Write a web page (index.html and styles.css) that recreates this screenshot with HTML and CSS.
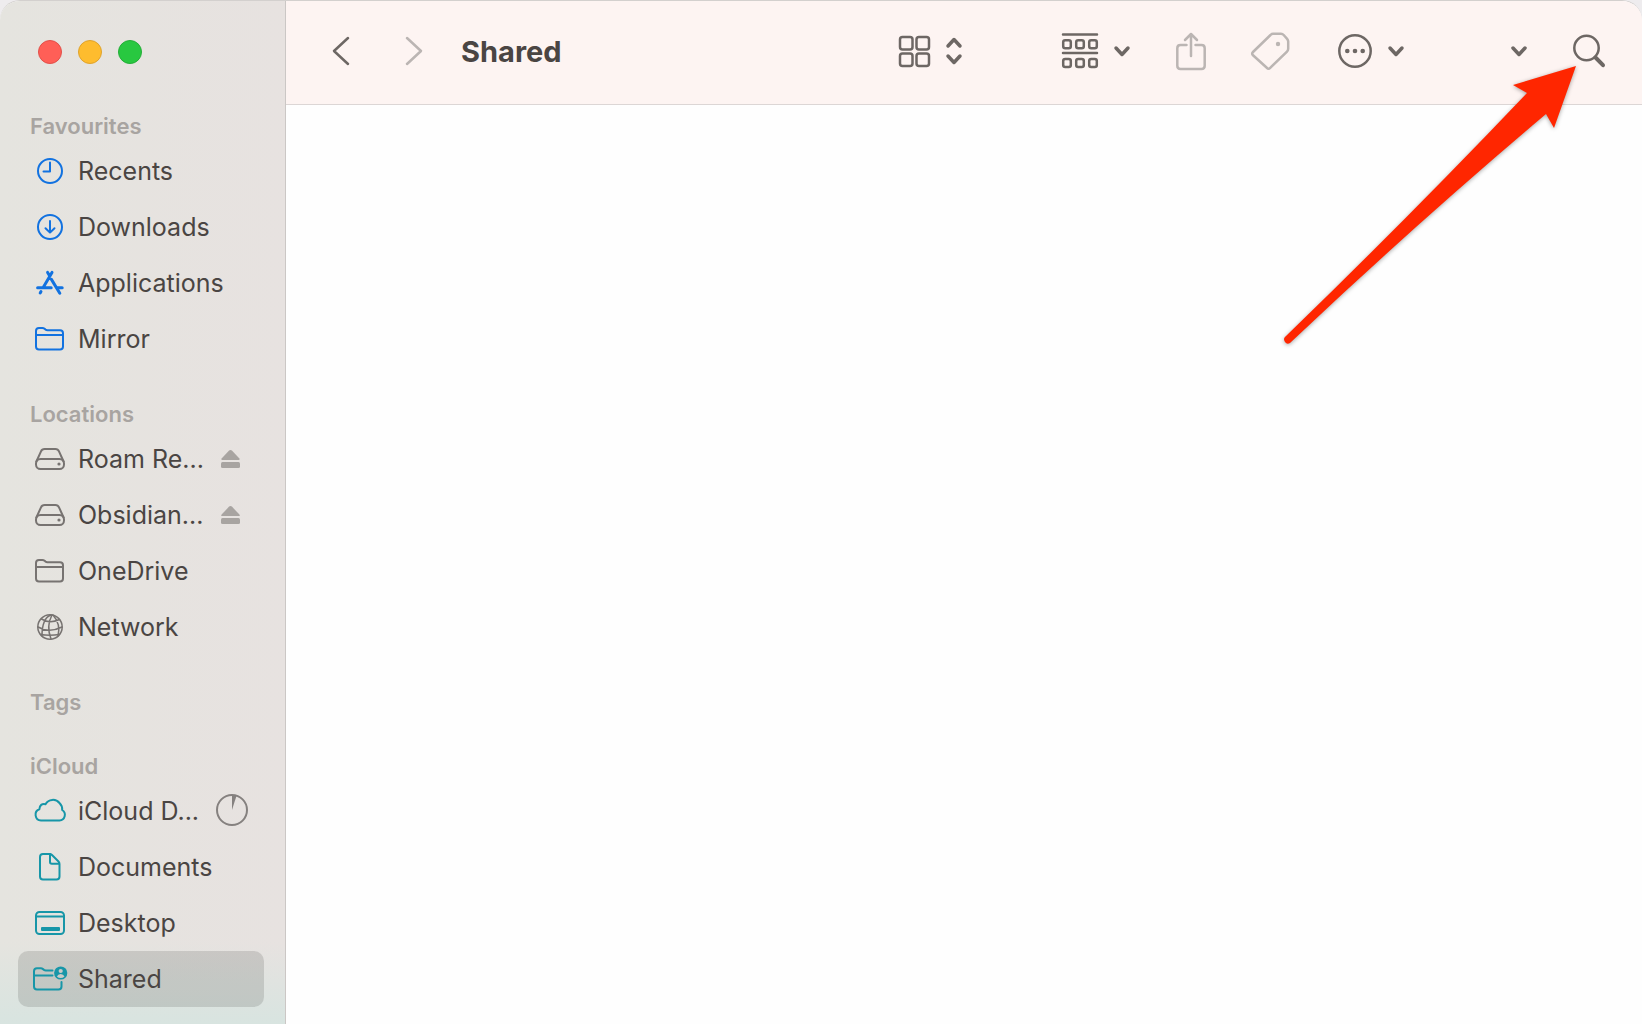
FILE: index.html
```html
<!DOCTYPE html>
<html lang="en">
<head>
  <meta charset="UTF-8" />
  <meta name="viewport" content="width=device-width, initial-scale=1.0" />
  <title>Shared</title>
  <link rel="stylesheet" href="styles.css">
</head>
<body>
  <div class="window">
    <aside class="sidebar">
      <div class="window-controls">
        <button class="dot close" aria-label="Close"></button>
        <button class="dot minimise" aria-label="Minimise"></button>
        <button class="dot zoom" aria-label="Zoom"></button>
      </div>

      <nav class="places">
        <section>
          <h2>Favourites</h2>
          <ul class="blue">
            <li>
              <a href="#recents">
                <svg class="icon" viewBox="0 0 34 34"><circle cx="17" cy="17" r="12" /><path d="M17 8.5v9h-6.5" /></svg>
                <span>Recents</span>
              </a>
            </li>
            <li>
              <a href="#downloads">
                <svg class="icon" viewBox="0 0 34 34"><circle cx="17" cy="17" r="12" /><path d="M17 11v11.5M12.5 18.2l4.5 4.4 4.5-4.4" /></svg>
                <span>Downloads</span>
              </a>
            </li>
            <li>
              <a href="#applications">
                <svg class="icon thick" viewBox="0 0 34 34"><path d="M19 6.4L10.2 21.6M14.6 6.4l2 3.4M18.4 13.4L26.8 27.2M4.6 21.7h13.6M24.6 21.7h4.6M8 25.6l-.8 1.4" /></svg>
                <span>Applications</span>
              </a>
            </li>
            <li>
              <a href="#mirror">
                <svg class="icon" viewBox="0 0 34 34"><path d="M3 24.5V9q0-3 3-3h3.4q1.2 0 2.2.8l1 .8q.8.6 1.8.6H27q3 0 3 3v13.3q0 3-3 3H6q-3 0-3-3zM3 13h27" /></svg>
                <span>Mirror</span>
              </a>
            </li>
          </ul>
        </section>

        <section>
          <h2>Locations</h2>
          <ul class="grey">
            <li>
              <a href="#roam">
                <svg class="icon" viewBox="0 0 34 34"><path d="M3.4 19.5L8 9.3Q9 7 11.5 7h11Q25 7 26 9.3l4.6 10.2" /><rect x="3" y="17" width="28" height="10" rx="4.5" /><circle class="solid" cx="26" cy="22" r="1.6" /></svg>
                <span>Roam Re...</span>
              </a>
              <button class="eject" aria-label="Eject Roam Research">
                <svg viewBox="0 0 32 34"><path d="M14.5 8q.8 0 1.4.6l7.500 8q1 1.400-.6 1.400H6.200q-1.600 0-.6-1.400l7.500-8q.6-.6 1.400-.6z" /><rect x="5" y="20" width="19" height="6" rx="1.5" /></svg>
              </button>
            </li>
            <li>
              <a href="#obsidian">
                <svg class="icon" viewBox="0 0 34 34"><path d="M3.4 19.5L8 9.3Q9 7 11.5 7h11Q25 7 26 9.3l4.6 10.2" /><rect x="3" y="17" width="28" height="10" rx="4.5" /><circle class="solid" cx="26" cy="22" r="1.6" /></svg>
                <span>Obsidian...</span>
              </a>
              <button class="eject" aria-label="Eject Obsidian">
                <svg viewBox="0 0 32 34"><path d="M14.5 8q.8 0 1.4.6l7.500 8q1 1.400-.6 1.400H6.200q-1.600 0-.6-1.400l7.500-8q.6-.6 1.400-.6z" /><rect x="5" y="20" width="19" height="6" rx="1.5" /></svg>
              </button>
            </li>
            <li>
              <a href="#onedrive">
                <svg class="icon" viewBox="0 0 34 34"><path d="M3 24.5V9q0-3 3-3h3.4q1.2 0 2.2.8l1 .8q.8.6 1.8.6H27q3 0 3 3v13.3q0 3-3 3H6q-3 0-3-3zM3 13h27" /></svg>
                <span>OneDrive</span>
              </a>
            </li>
            <li>
              <a href="#network">
                <svg class="icon thin" viewBox="0 0 34 34"><circle cx="17" cy="17" r="12.2" /><path d="M19 5Q13 16 18 29M18 5Q9 8 9 26M20 5Q28 14 25 26M8.500 9q8 5 18 .5M5 17q11 6.500 24 0M7.500 24.500q9 1.500 19 0" /></svg>
                <span>Network</span>
              </a>
            </li>
          </ul>
        </section>

        <section>
          <h2>Tags</h2>
        </section>

        <section>
          <h2>iCloud</h2>
          <ul class="teal">
            <li>
              <a href="#icloud-drive">
                <svg class="icon" viewBox="0 0 34 34"><path d="M8 26.5h18.5a5.7 5.7 0 0 0 2.700-10.500Q29.500 12 26.500 9A8.500 8.500 0 0 0 12.500 10.200Q7 9 6.300 15.300A5.800 5.800 0 0 0 8 26.500z" /></svg>
                <span>iCloud D...</span>
              </a>
              <svg class="progress" viewBox="0 0 32 34" role="img" aria-label="Syncing"><circle cx="16" cy="16" r="15" /><path d="M16 16V1q2 0 4.5.8z" /></svg>
            </li>
            <li>
              <a href="#documents">
                <svg class="icon" viewBox="0 0 34 34"><path d="M10 4h6.5q1.500 0 2.500 1l6.500 6.500q1 1 1 2.500v12.500q0 3-3 3H10q-3 0-3-3V7q0-3 3-3zM17 4v8q0 1.800 1.800 1.800h7.500" /></svg>
                <span>Documents</span>
              </a>
            </li>
            <li>
              <a href="#desktop">
                <svg class="icon" viewBox="0 0 34 34"><rect x="3" y="6" width="28" height="22" rx="3.5" /><path d="M3 10.5h28" /><rect class="solid" x="8" y="21" width="19" height="4" rx="1" /></svg>
                <span>Desktop</span>
              </a>
            </li>
            <li class="selected">
              <a href="#shared" aria-current="page">
                <svg class="icon" viewBox="0 0 34 34"><path d="M19.500 8.500h-6.700q-1 0-1.800-.6l-1-.8Q9 6.300 7.900 6.300H4q-3 0-3 3V24.500q0 3 3 3h21.500q3 0 3-3v-4.500M1 13.500h18.500" /><circle class="solid" cx="27.700" cy="11" r="6.600" /><circle class="cut" cx="27.700" cy="9" r="2.100" /><path class="cut" d="M23.900 14.500q1-2.500 3.800-2.500t3.800 2.500q-1.600 1.500-3.800 1.500t-3.800-1.500z" /></svg>
                <span>Shared</span>
              </a>
            </li>
          </ul>
        </section>
      </nav>
    </aside>

    <main class="main">
      <header class="toolbar">
        <div class="history">
          <button aria-label="Back"><svg width="18" height="30" viewBox="0 0 18 30"><path d="M16 2L2 15l14 13" /></svg></button>
          <button aria-label="Forward" disabled><svg width="18" height="30" viewBox="0 0 18 30"><path d="M2 2l14 13L2 28" /></svg></button>
        </div>
        <h1>Shared</h1>

        <div class="actions">
          <button class="view" aria-label="View as icons">
            <svg width="32" height="32" viewBox="0 0 32 32"><rect x="2" y="2" width="12.5" height="12.5" rx="2.5" /><rect x="18.500" y="2" width="12.5" height="12.5" rx="2.5" /><rect x="2" y="18.5" width="12.5" height="12.5" rx="2.5" /><rect x="18.500" y="18.5" width="12.5" height="12.5" rx="2.5" /></svg>
            <svg class="chevron" width="16" height="28" viewBox="0 0 16 28"><path d="M2 9l6-6.500L14 9M2 19l6 6.500 6-6.500" /></svg>
          </button>
          <button aria-label="Group items">
            <svg width="36" height="36" viewBox="0 0 36 36"><path d="M1 1.500h34M1 20h34" /><rect x="1.200" y="7.200" width="7.600" height="8" rx="2" /><rect x="14.200" y="7.200" width="7.600" height="8" rx="2" /><rect x="27.200" y="7.200" width="7.600" height="8" rx="2" /><rect x="1.200" y="26" width="7.600" height="8" rx="2" /><rect x="14.200" y="26" width="7.600" height="8" rx="2" /><rect x="27.200" y="26" width="7.600" height="8" rx="2" /></svg>
            <svg class="chevron" width="16" height="12" viewBox="0 0 16 12"><path d="M2 3l6 6.500L14 3" /></svg>
          </button>
          <button aria-label="Share" disabled><svg width="30" height="38" viewBox="0 0 30 38"><path d="M10.500 13H4.500q-3.200 0-3.200 3.200v17.600q0 3.200 3.200 3.200h21q3.200 0 3.200-3.200V16.200q0-3.200-3.200-3.200h-6M15 24V2M9 8l6-6 6 6" /></svg></button>
          <button aria-label="Edit tags" disabled><svg width="40" height="38" viewBox="1 0 40 38"><path d="M22 1.800h8q1.600 0 2.700 1.200l3.400 3.800q1.100 1.200 1.100 2.800v7.200q0 1.600-1.200 2.800L19.200 35.800q-1.700 1.700-3.400 0L2 23.300q-1.700-1.600 0-3.300L19.500 3q1.100-1.200 2.500-1.200z" /><circle class="solid" cx="27" cy="12" r="2.200" /></svg></button>
          <button class="more" aria-label="More actions">
            <svg width="34" height="34" viewBox="0 0 34 34"><circle cx="17" cy="17" r="15.700" /><g class="solid"><circle cx="9.300" cy="17" r="2.300" /><circle cx="17" cy="17" r="2.300" /><circle cx="24.700" cy="17" r="2.300" /></g></svg>
            <svg class="chevron" width="16" height="12" viewBox="0 0 16 12"><path d="M2 3l6 6.500L14 3" /></svg>
          </button>
          <button aria-label="Show more items"><svg class="chevron" width="16" height="12" viewBox="0 0 16 12"><path d="M2 3l6 6.500L14 3" /></svg></button>
          <button aria-label="Search"><svg width="32" height="34" viewBox="0 0 32 34"><circle cx="13.500" cy="14" r="12.200" /><path class="handle" d="M22.500 23.500l7.500 7.700" /></svg></button>
        </div>
      </header>
      <div class="files"></div>
    </main>

    <!-- arrow pointing at the search button -->
    <svg class="arrow" width="300" height="290" viewBox="0 0 300 290" aria-hidden="true">
      <path d="M234 6L171 25l14 8Q70 154-57 277q-2 2 0 5 2 3 5 1Q76 162 204 54l8 14z" />
    </svg>
  </div>
</body>
</html>
```
FILE: styles.css
```css
* {
  box-sizing: border-box;
}
body {
  margin: 0;
  font-family: Inter, "Liberation Sans", sans-serif;
  background-color: #eeecee;
  color: #4a4543;
}
h1, h2, ul {
  margin: 0;
  padding: 0;
}
ul {
  list-style: none;
}
button {
  display: flex;
  align-items: center;
  padding: 0;
  border: none;
  background: none;
  color: inherit;
}
svg {
  display: block;
  flex: none;
  overflow: visible;
  fill: none;
  stroke: currentColor;
  stroke-width: 2;
  stroke-linecap: round;
  stroke-linejoin: round;
}
.solid {
  fill: currentColor;
  stroke: none;
}
.window {
  position: relative;
  display: flex;
  min-height: 100vh;
  overflow: hidden;
  border-top: 1px solid #d3d0ce;
  border-radius: 20px 20px 0 0;
  background-color: #fefefe;
}

/* sidebar */
.sidebar {
  flex: none;
  width: 286px;
  border-right: 1px solid #cbc7c5;
  background: linear-gradient(to bottom, transparent 92%, #d8e4e0 100%), linear-gradient(to right, #e5e4df, #e7e2e0);
}
.window-controls {
  display: flex;
  gap: 16px;
  padding: 39px 38px 45px;
}
.dot {
  width: 24px;
  height: 24px;
  border: 1px solid;
  border-radius: 50%;
}
.close {
  background-color: #ff5f57;
  border-color: #e2504a;
}
.minimise {
  background-color: #febc2e;
  border-color: #dfa32c;
}
.zoom {
  background-color: #28c840;
  border-color: #24ae38;
}
.places {
  display: flex;
  flex-direction: column;
  gap: 30px;
}
h2 {
  padding-left: 30px;
  font-size: 22px;
  font-weight: 600;
  line-height: 34px;
  color: #a8a4a1;
}
li {
  display: flex;
  align-items: center;
  height: 56px;
  margin: 0 21px 0 18px;
  padding: 0 16px 0 15px;
  border-radius: 10px;
}
li a {
  display: flex;
  flex: 1;
  align-items: center;
  gap: 11px;
  font-size: 25px;
  color: #4a4543;
  text-decoration: none;
  white-space: nowrap;
}
.icon {
  width: 34px;
  height: 34px;
}
.thick {
  stroke-width: 3;
}
.thin {
  stroke-width: 1.5;
}
.blue .icon {
  color: #1272e0;
}
.grey .icon {
  color: #777371;
}
.teal .icon {
  color: #1796a8;
}
.selected {
  background-color: rgba(0, 0, 0, 0.12);
}
.cut {
  fill: #cbcac7;
  stroke: none;
}
.eject svg {
  width: 32px;
  height: 34px;
  fill: #a8a4a1;
  stroke: none;
}
.progress {
  width: 32px;
  height: 34px;
  color: #85817f;
}
.progress path {
  fill: currentColor;
  stroke: none;
}

/* toolbar and file area */
.main {
  display: flex;
  flex: 1;
  flex-direction: column;
}
.toolbar {
  display: flex;
  align-items: center;
  gap: 38px;
  height: 104px;
  padding: 0 37px 3px 46px;
  border-bottom: 1px solid #dcd6d5;
  background-color: #fdf4f2;
  color: #6d6764;
}
.history {
  display: flex;
  gap: 55px;
}
.actions {
  display: flex;
  align-items: center;
  gap: 46px;
}
.toolbar svg {
  stroke-width: 2.5;
}
.toolbar button {
  gap: 16px;
}
.toolbar button:disabled {
  color: #bbb5b3;
}
.toolbar .chevron {
  stroke-width: 3.5;
}
.toolbar .solid {
  stroke: none;
}
.toolbar .handle {
  stroke-width: 4;
}
h1 {
  flex: 1;
  font-size: 29px;
  font-weight: 700;
  color: #4a4543;
}
.view {
  margin-right: 54px;
}
.more {
  margin-right: 61px;
}
.files {
  flex: 1;
}

/* drawn over the toolbar */
.arrow {
  position: absolute;
  top: 59px;
  right: 0;
  fill: #ff2600;
  stroke: none;
  filter: drop-shadow(0 1px 2px rgba(0, 0, 0, 0.35));
  pointer-events: none;
}
```
